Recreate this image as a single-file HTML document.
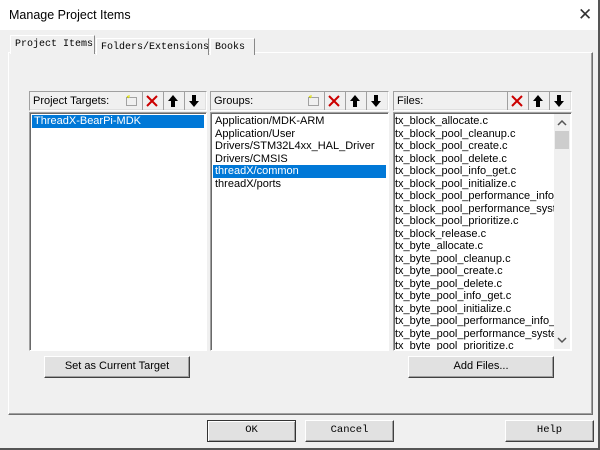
<!DOCTYPE html>
<html><head><style>
*{margin:0;padding:0;box-sizing:border-box}
body{width:600px;height:450px;background:#f0f0f0;position:relative;overflow:hidden;font-family:"Liberation Sans",sans-serif;font-size:11px;color:#000}
.a{position:absolute}
.title{left:0;top:0;width:600px;height:30px;background:#fff;font-size:12.5px;padding:8px 0 0 9px}
.tab{font-family:"Liberation Mono",monospace;font-size:10px;border:1px solid #fff;border-right:1px solid #888;border-bottom:none;background:#f0f0f0;padding:3px 0 0 4px;height:17px}
.panel{border:1px solid #fff;border-right-color:#707070;border-bottom-color:#707070;box-shadow:inset -1px -1px 0 #a0a0a0}
.hdr{border:1px solid #fff;border-left-color:#a0a0a0;border-top-color:#a0a0a0;box-shadow:inset -1px -1px 0 #e0e0e0;height:20px;padding:3px 0 0 3px}
.list{background:#fff;border:1px solid #a0a0a0;border-right-color:#fff;border-bottom-color:#fff;box-shadow:inset 1px 1px 0 #696969;padding:2px 0 0 2px;line-height:12.5px;overflow:hidden;white-space:nowrap}
.sel{background:#0078d7;color:#fff}
.btn{background:#e1e1e1;border:1px solid #fff;border-right-color:#404040;border-bottom-color:#404040;box-shadow:inset -1px -1px 0 #a0a0a0;text-align:center;line-height:19px}
.ser{font-family:"Liberation Mono",monospace;font-size:10.5px}
.ib{position:absolute;top:0;width:19px;height:18px;border-left:1px solid #a0a0a0;text-align:center;line-height:17px}
.ib svg{display:block;margin:3px auto 0}
</style></head><body>
<div class="a title">Manage Project Items</div>
<div class="a" style="left:578px;top:5px;font-size:17px;color:#333">✕</div>
<div class="a" style="left:598px;top:0;width:2px;height:450px;background:#555"></div>
<div class="a" style="left:0;top:448px;width:600px;height:2px;background:#555"></div>

<div class="a panel" style="left:8px;top:52px;width:585px;height:363px"></div>
<div class="a tab" style="left:10px;top:35px;width:85px;height:19px;z-index:2">Project Items</div>
<div class="a tab" style="left:96px;top:38px;width:113px">Folders/Extensions</div>
<div class="a tab" style="left:210px;top:38px;width:45px">Books</div>

<!-- Targets -->
<div class="a hdr" style="left:29px;top:91px;width:178px">Project Targets:
 <div class="ib" style="left:92px;border:none"><svg width="13" height="12"><rect x="1.5" y="2.5" width="10" height="8" fill="none" stroke="#555" stroke-dasharray="1 1"/><path d="M2 1l2 2M4 0v2" stroke="#dd0"/></svg></div>
 <div class="ib" style="left:112px"><svg width="12" height="12"><path d="M1 1L11 11M11 1L1 11" stroke="#c00" stroke-width="2"/></svg></div>
 <div class="ib" style="left:133px"><svg width="10" height="12"><path d="M5 0L10 6H7V12H3V6H0Z"/></svg></div>
 <div class="ib" style="left:154px"><svg width="10" height="12"><path d="M5 12L10 6H7V0H3V6H0Z"/></svg></div>
</div>
<div class="a list" style="left:29px;top:112px;width:178px;height:239px"><div class="sel" style="padding-left:2px;width:172px">ThreadX-BearPi-MDK</div></div>

<!-- Groups -->
<div class="a hdr" style="left:210px;top:91px;width:179px">Groups:
 <div class="ib" style="left:93px;border:none"><svg width="13" height="12"><rect x="1.5" y="2.5" width="10" height="8" fill="none" stroke="#555" stroke-dasharray="1 1"/><path d="M2 1l2 2M4 0v2" stroke="#dd0"/></svg></div>
 <div class="ib" style="left:113px"><svg width="12" height="12"><path d="M1 1L11 11M11 1L1 11" stroke="#c00" stroke-width="2"/></svg></div>
 <div class="ib" style="left:134px"><svg width="10" height="12"><path d="M5 0L10 6H7V12H3V6H0Z"/></svg></div>
 <div class="ib" style="left:155px"><svg width="10" height="12"><path d="M5 12L10 6H7V0H3V6H0Z"/></svg></div>
</div>
<div class="a list" style="left:210px;top:112px;width:179px;height:239px">
<div style="padding-left:2px">Application/MDK-ARM</div>
<div style="padding-left:2px">Application/User</div>
<div style="padding-left:2px">Drivers/STM32L4xx_HAL_Driver</div>
<div style="padding-left:2px">Drivers/CMSIS</div>
<div class="sel" style="padding-left:2px;width:173px">threadX/common</div>
<div style="padding-left:2px">threadX/ports</div>
</div>

<!-- Files -->
<div class="a hdr" style="left:393px;top:91px;width:179px">Files:
 <div class="ib" style="left:113px"><svg width="12" height="12"><path d="M1 1L11 11M11 1L1 11" stroke="#c00" stroke-width="2"/></svg></div>
 <div class="ib" style="left:134px"><svg width="10" height="12"><path d="M5 0L10 6H7V12H3V6H0Z"/></svg></div>
 <div class="ib" style="left:155px"><svg width="10" height="12"><path d="M5 12L10 6H7V0H3V6H0Z"/></svg></div>
</div>
<div class="a list" style="left:393px;top:112px;width:179px;height:239px;padding-left:1px">
<div style="width:160px;overflow:hidden">
tx_block_allocate.c<br>tx_block_pool_cleanup.c<br>tx_block_pool_create.c<br>tx_block_pool_delete.c<br>tx_block_pool_info_get.c<br>tx_block_pool_initialize.c<br>tx_block_pool_performance_info_get.c<br>tx_block_pool_performance_system<br>tx_block_pool_prioritize.c<br>tx_block_release.c<br>tx_byte_allocate.c<br>tx_byte_pool_cleanup.c<br>tx_byte_pool_create.c<br>tx_byte_pool_delete.c<br>tx_byte_pool_info_get.c<br>tx_byte_pool_initialize.c<br>tx_byte_pool_performance_info_get<br>tx_byte_pool_performance_system<br>tx_byte_pool_prioritize.c
</div></div>
<div class="a" style="left:554px;top:114px;width:16px;height:235px;background:#f0f0f0"></div>
<svg class="a" style="left:557px;top:120px" width="10" height="7"><path d="M1 5L5 1L9 5" fill="none" stroke="#555" stroke-width="1.5"/></svg>
<div class="a" style="left:555px;top:131px;width:14px;height:18px;background:#cdcdcd"></div>
<svg class="a" style="left:557px;top:337px" width="10" height="7"><path d="M1 1L5 5L9 1" fill="none" stroke="#555" stroke-width="1.5"/></svg>

<div class="a btn" style="left:44px;top:356px;width:146px;height:22px">Set as Current Target</div>
<div class="a btn" style="left:408px;top:356px;width:146px;height:22px">Add Files...</div>

<div class="a btn ser" style="left:207px;top:420px;width:89px;height:22px;border:1px solid #333;box-shadow:inset 1px 1px 0 #fff,inset -1px -1px 0 #a0a0a0">OK</div>
<div class="a btn ser" style="left:305px;top:420px;width:89px;height:22px">Cancel</div>
<div class="a btn ser" style="left:505px;top:420px;width:89px;height:22px">Help</div>
</body></html>
